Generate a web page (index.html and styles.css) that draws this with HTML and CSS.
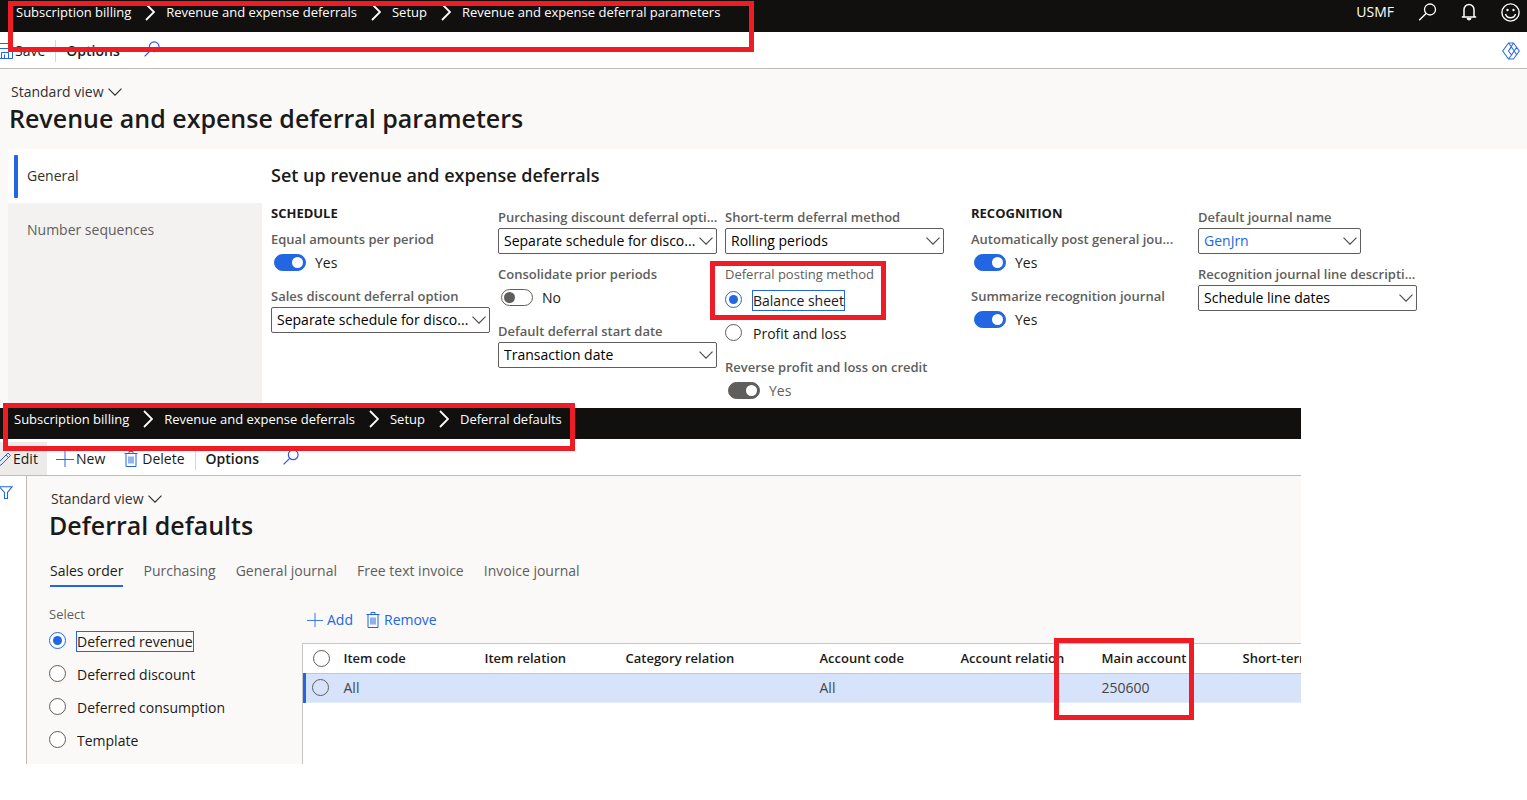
FILE: index.html
```html
<!DOCTYPE html>
<html lang="en">
<head>
<meta charset="utf-8">
<title>Revenue and expense deferral parameters</title>
<link rel="stylesheet" href="styles.css">
</head>
<body>
<svg class="defs" aria-hidden="true">
  <symbol id="crumb" viewBox="0 0 10 18"><path d="M1 1l8 8L1 17" fill="none" stroke="currentColor" stroke-width="1.800"/></symbol>
  <symbol id="down" viewBox="0 0 14 8"><path d="M.5.700L7 7.200 13.500.700" fill="none" stroke="currentColor" stroke-width="1.200"/></symbol>
  <symbol id="search" viewBox="0 0 18 18"><circle cx="11.500" cy="6.500" r="5.500" fill="none" stroke="currentColor" stroke-width="1.300"/><path d="M7.500 10.500L.7 17.300" stroke="currentColor" stroke-width="1.400"/></symbol>
  <symbol id="plus" viewBox="0 0 18 16"><path d="M9 0v16M0 8.500h18" stroke="currentColor" stroke-width="1" fill="none"/></symbol>
  <symbol id="trash" viewBox="0 0 14 16"><path d="M.5 2.500h13M5 2.500v-2h4v2M2 2.500v13h10v-13M5 5.500v7M7 5.500v7M9 5.500v7" fill="none" stroke="currentColor"/></symbol>
</svg>

<section class="screen first">
  <header class="topbar">
    <nav class="crumbs" aria-label="Breadcrumb">
      <a href="#">Subscription billing</a><svg><use href="#crumb"/></svg>
      <a href="#">Revenue and expense deferrals</a><svg><use href="#crumb"/></svg>
      <a href="#">Setup</a><svg><use href="#crumb"/></svg>
      <a href="#">Revenue and expense deferral parameters</a>
    </nav>
    <div class="tools">
      <span class="company">USMF</span>
      <button aria-label="Search"><svg width="19" height="18"><use href="#search"/></svg></button>
      <button aria-label="Notifications"><svg width="16" height="18" viewBox="0 0 16 18"><path d="M3 13.500V6.500a5 5 0 0 1 10 0v7M.8 14h14.400" fill="none" stroke="currentColor" stroke-width="1.500"/><path d="M6 15a2 2 0 0 0 4 0" fill="currentColor" stroke="currentColor"/></svg></button>
      <button aria-label="Feedback"><svg width="19" height="19" viewBox="0 0 19 19"><circle cx="9.500" cy="9.500" r="8.600" fill="none" stroke="currentColor" stroke-width="1.400"/><circle cx="6.500" cy="7" r="1.200" fill="currentColor"/><circle cx="12.500" cy="7" r="1.200" fill="currentColor"/><path d="M4.500 11a5.200 5.200 0 0 0 10 0" fill="none" stroke="currentColor" stroke-width="1.400"/></svg></button>
    </div>
  </header>
  <div class="actions">
    <button class="save"><svg width="13" height="16" viewBox="0 0 13 16"><path d="M0 .5h12.500v15H0M0 5.500h12.500M1.500 15V9.500h7V15M4.500 15v-3.500" fill="none" stroke="#2266e3"/></svg>Save</button>
    <span class="divider"></span>
    <button class="strong">Options</button>
    <button class="find" aria-label="Search actions"><svg width="16" height="16"><use href="#search"/></svg></button>
    <button class="apps" aria-label="Power Apps"><svg width="18" height="18" viewBox="0 0 18 18"><path d="M6.500 1h5L17.300 9l-5.800 8h-5L.7 9zM6.500 1l3 4-3 4 3 4-3 4M11.500 1l-5 8M9.500 5l5 7.500M9.500 13l5-7.500" fill="none" stroke="#2f6fe4" stroke-width="1.100"/></svg></button>
  </div>
  <div class="heading">
    <button class="view">Standard view <svg width="14" height="8"><use href="#down"/></svg></button>
    <h1>Revenue and expense deferral parameters</h1>
  </div>
  <div class="params">
    <nav class="side">
      <a class="current" href="#">General</a>
      <a href="#">Number sequences</a>
    </nav>
    <main class="form">
      <h2>Set up revenue and expense deferrals</h2>
      <div class="groups">
        <div class="column">
          <h3>SCHEDULE</h3>
          <div class="field"><label for="equal">Equal amounts per period</label><div class="switch"><input type="checkbox" id="equal" checked><span>Yes</span></div></div>
          <div class="field"><label for="sales">Sales discount deferral option</label><select id="sales"><option>Separate schedule for disco...</option></select></div>
        </div>
        <div class="column">
          <div class="field"><label for="purch">Purchasing discount deferral opti...</label><select id="purch"><option>Separate schedule for disco...</option></select></div>
          <div class="field"><label for="cons">Consolidate prior periods</label><div class="switch"><input type="checkbox" id="cons"><span>No</span></div></div>
          <div class="field"><label for="start">Default deferral start date</label><select id="start"><option>Transaction date</option></select></div>
        </div>
        <div class="column">
          <div class="field"><label for="short">Short-term deferral method</label><select id="short"><option>Rolling periods</option></select></div>
          <fieldset class="posting">
            <legend>Deferral posting method</legend>
            <label class="radio"><input type="radio" name="posting" checked><span>Balance sheet</span></label>
            <label class="radio"><input type="radio" name="posting"><span>Profit and loss</span></label>
            <div class="mark mark-posting"></div>
          </fieldset>
          <div class="field"><label for="reverse">Reverse profit and loss on credit</label><div class="switch muted"><input type="checkbox" id="reverse" checked disabled><span>Yes</span></div></div>
        </div>
        <div class="column apart">
          <h3>RECOGNITION</h3>
          <div class="field"><label for="auto">Automatically post general jou...</label><div class="switch"><input type="checkbox" id="auto" checked><span>Yes</span></div></div>
          <div class="field"><label for="summ">Summarize recognition journal</label><div class="switch"><input type="checkbox" id="summ" checked><span>Yes</span></div></div>
        </div>
        <div class="column">
          <div class="field"><label for="journal">Default journal name</label><select id="journal" class="narrow"><option>GenJrn</option></select></div>
          <div class="field"><label for="line">Recognition journal line descripti...</label><select id="line"><option>Schedule line dates</option></select></div>
        </div>
      </div>
    </main>
  </div>
  <div class="mark mark-path"></div>
</section>

<section class="screen second">
  <header class="topbar">
    <nav class="crumbs" aria-label="Breadcrumb">
      <a href="#">Subscription billing</a><svg><use href="#crumb"/></svg>
      <a href="#">Revenue and expense deferrals</a><svg><use href="#crumb"/></svg>
      <a href="#">Setup</a><svg><use href="#crumb"/></svg>
      <a href="#">Deferral defaults</a>
    </nav>
  </header>
  <div class="actions">
    <button class="edit"><svg width="11" height="16" viewBox="0 0 11 16"><path d="M0 10L8 2l2.500 2.500L1 14l-1 .3M6 4l2.500 2.500" fill="none" stroke="#2266e3"/></svg>Edit</button>
    <button class="new"><svg width="18" height="16"><use href="#plus"/></svg>New</button>
    <button class="delete"><svg width="14" height="16"><use href="#trash"/></svg>Delete</button>
    <span class="divider"></span>
    <button class="strong">Options</button>
    <button class="find" aria-label="Search actions"><svg width="16" height="16"><use href="#search"/></svg></button>
  </div>
  <div class="workspace">
    <aside class="rail"><button aria-label="Filter"><svg width="13" height="14" viewBox="0 0 13 14"><path d="M0 .8h12L7.500 6.500v6h-3v-6L0 1.500" fill="none" stroke="#2266e3" stroke-width="1.100"/></svg></button></aside>
    <main class="content">
      <button class="view">Standard view <svg width="14" height="8"><use href="#down"/></svg></button>
      <h1>Deferral defaults</h1>
      <nav class="tabs">
        <a class="current" href="#">Sales order</a>
        <a href="#">Purchasing</a>
        <a href="#">General journal</a>
        <a href="#">Free text invoice</a>
        <a href="#">Invoice journal</a>
      </nav>
      <div class="split">
        <fieldset class="kinds">
          <legend>Select</legend>
          <label class="radio"><input type="radio" name="kind" checked><span>Deferred revenue</span></label>
          <label class="radio"><input type="radio" name="kind"><span>Deferred discount</span></label>
          <label class="radio"><input type="radio" name="kind"><span>Deferred consumption</span></label>
          <label class="radio"><input type="radio" name="kind"><span>Template</span></label>
          <label class="radio"><input type="radio" name="kind" aria-label="More"></label>
        </fieldset>
        <div class="grid">
          <div class="grid-actions">
            <button><svg width="16" height="16"><use href="#plus"/></svg>Add</button>
            <button><svg width="14" height="16"><use href="#trash"/></svg>Remove</button>
          </div>
          <div class="table-box">
            <table>
              <colgroup><col class="c-pick"><col class="c-std"><col class="c-std"><col class="c-wide"><col class="c-std"><col class="c-std"><col class="c-std"><col></colgroup>
              <thead><tr><th><input type="radio" name="all" aria-label="Select all"></th><th>Item code</th><th>Item relation</th><th>Category relation</th><th>Account code</th><th>Account relation</th><th>Main account</th><th>Short-term</th></tr></thead>
              <tbody><tr><td><input type="radio" name="row" aria-label="Select row"></td><td>All</td><td></td><td></td><td>All</td><td></td><td>250600</td><td></td></tr></tbody>
            </table>
            <div class="mark mark-account"></div>
          </div>
        </div>
      </div>
    </main>
  </div>
  <div class="mark mark-path"></div>
</section>
</body>
</html>
```

FILE: styles.css
```css
* { box-sizing: border-box; }

body {
  margin: 0;
  overflow: hidden;
  background: #fff;
  color: #1b1a19;
  font: 14px/20px "Open Sans", "Noto Sans", sans-serif;
}

a { color: inherit; text-decoration: none; white-space: nowrap; }
h1, h2, h3 { margin: 0; white-space: nowrap; }
svg { flex: none; display: block; }
.defs { position: absolute; width: 0; height: 0; }

button {
  display: flex;
  align-items: center;
  padding: 0;
  border: 0;
  background: none;
  color: inherit;
  font: inherit;
  white-space: nowrap;
}

.screen { position: relative; }
.first { height: 408px; }
.first .params { height: 259px; }
.second { margin-right: 226px; }

/* Top bar */
.topbar {
  display: flex;
  justify-content: space-between;
  height: 32px;
  padding: 0 7px 8px 16px;
  background: #11100f;
  color: #fff;
}
.second .topbar { height: 31px; padding-left: 14px; padding-bottom: 9px; }
.crumbs { display: flex; align-items: center; font-size: 13px; }
.crumbs svg { width: 10px; height: 18px; margin: 0 11px 0 14px; }
.tools { display: flex; align-items: center; }
.tools button { margin-left: 24px; }
.company { font-size: 14px; }

/* Action bar */
.actions {
  display: flex;
  align-items: center;
  height: 37px;
  padding-top: 2px;
  border-bottom: 1px solid #bebbb8;
}
.second .actions { padding-top: 3px; }
.strong { font-weight: 600; }
.divider { width: 1px; height: 22px; margin: 0 10px; background: #d8d6d4; }
.find { margin: 0 0 4px 24px; color: #2f55dd; }
.apps { margin-left: auto; margin-right: 7px; }
.save { gap: 2px; }
.edit { gap: 2px; width: 47px; height: 33px; background: #edebe9; }
.new { gap: 2px; margin-left: 9px; }
.delete { gap: 4px; margin-left: 19px; }
.new svg, .delete svg { color: #2266e3; }

/* Page headings */
.heading { height: 80px; padding: 13px 9px 0; background: #faf9f8; }
.view { gap: 4px; margin-left: 2px; color: #323130; }
h1 { font-size: 25px; line-height: 32px; font-weight: 600; }

/* Parameters form */
.params { display: flex; padding-left: 8px; background: linear-gradient(to right, #faf9f8 8px, #fff 8px); }
.side { flex: 0 0 254px; background: #f3f2f1; }
.side a {
  display: flex;
  align-items: center;
  height: 54px;
  padding-left: 9px;
  color: #605e5c;
}
.side a::before { content: ""; width: 4px; height: 43px; margin: 0 9px 0 -3px; border-radius: 1px; }
.side .current { background: #fff; color: #323130; }
.side .current::before { background: #2266e3; }
.form { flex: 1; min-width: 0; padding: 14px 9px 0; }
h2 { font-size: 18px; line-height: 24px; font-weight: 600; margin-bottom: 20px; }
h3 { font-size: 13px; line-height: 12px; font-weight: 700; }
.groups { display: flex; gap: 9px; }
.column { display: flex; flex-direction: column; gap: 10px; flex: 0 0 218px; min-width: 0; }
.apart { margin-left: 19px; }
.field { display: flex; flex-direction: column; gap: 1px; }
.field > label { color: #605e5c; font-size: 13px; font-weight: 600; white-space: nowrap; }

select {
  appearance: none;
  width: 219px;
  height: 26px;
  padding: 0 20px 0 5px;
  border: 1px solid #605e5c;
  border-radius: 2px;
  background: #fff url("data:image/svg+xml,%3Csvg xmlns='http://www.w3.org/2000/svg' width='14' height='8'%3E%3Cpath d='M.5.7L7 7.200 13.500.7' fill='none' stroke='%23504e4c' stroke-width='1.200'/%3E%3C/svg%3E") no-repeat right 3px center;
  color: #000;
  font: inherit;
}
.narrow { width: 163px; color: #2266e3; }

.switch { display: flex; align-items: center; gap: 9px; height: 26px; padding-left: 3px; }
.switch input {
  appearance: none;
  display: flex;
  align-items: center;
  width: 32px;
  height: 17px;
  margin: 0 0 2px;
  padding: 0 2px;
  border: 1px solid #605e5c;
  border-radius: 9px;
}
.switch input::before { content: ""; width: 11px; height: 11px; border-radius: 50%; background: #605e5c; }
.switch input:checked { justify-content: flex-end; border-color: #2266e3; background: #2266e3; }
.switch input:checked::before { background: #fff; }
.muted { color: #605e5c; }
.muted input:checked { border-color: #605e5c; background: #605e5c; }

/* Radio lists */
fieldset { position: relative; min-width: 0; margin: 0; padding: 0; border: 0; }
legend { padding: 0; color: #605e5c; font-size: 13px; margin-bottom: 4px; }
.radio { display: flex; align-items: center; gap: 10px; height: 26px; margin-bottom: 7px; white-space: nowrap; }
.posting legend { margin-bottom: 3px; }
.posting .radio:nth-of-type(2) { margin-bottom: 1px; }
.radio span { border: 1px solid transparent; line-height: 19px; }
.radio input:checked + span { border-color: #2266e3; }
input[type="radio"] {
  appearance: none;
  display: grid;
  place-items: center;
  flex: none;
  width: 17px;
  height: 17px;
  margin: 0;
  border: 1px solid #605e5c;
  border-radius: 50%;
  background: #fff;
}
.radio input[type="radio"] { margin-bottom: 2px; }
input[type="radio"]:checked { border-color: #2266e3; }
input[type="radio"]:checked::before { content: ""; width: 9px; height: 9px; border-radius: 50%; background: #2266e3; }

/* Deferral defaults */
.workspace { display: flex; height: 288px; overflow: hidden; }
.rail { flex: 0 0 27px; padding-top: 10px; border-right: 1px solid #bebbb8; }
.content { flex: 1; min-width: 0; padding: 13px 0 0 22px; background: #faf9f8; }
.tabs { display: flex; gap: 20px; margin: 20px 0 17px 1px; color: #605e5c; }
.tabs a { padding-bottom: 4px; border-bottom: 2px solid transparent; }
.tabs .current { border-color: #2266e3; color: #1b1a19; }
.split { display: flex; }
.kinds { flex: 0 0 254px; }
.grid { flex: 1; min-width: 0; padding-top: 6px; }
.grid-actions { display: flex; gap: 13px; padding-left: 4px; margin-bottom: 13px; color: #2266e3; }
.grid-actions button { gap: 4px; }
.table-box { position: relative; height: 160px; margin-left: -1px; border: 1px solid #c8c6c4; border-width: 1px 0 0 1px; background: #fff; }
table { width: 100%; table-layout: fixed; border-collapse: collapse; }
th, td { height: 29px; padding: 0 0 0 8px; overflow: hidden; text-align: left; white-space: nowrap; }
th { border-bottom: 1px solid #c8c6c4; font-size: 13px; font-weight: 600; }
td { border-bottom: 1px solid #e4ecfc; background: #d7e3fb; color: #484644; }
td:first-child { border-left: 3px solid #2266e3; padding-left: 6px; }
td input[type="radio"] { background: transparent; }
.c-pick { width: 31px; }
.c-std { width: 141px; }
.c-wide { width: 194px; }

/* Highlight frames drawn over the content */
.mark { position: absolute; border: 5px solid #ee1c24; pointer-events: none; }
.first > .mark-path { left: 8px; top: 1px; width: 746px; height: 51px; }
.second > .mark-path { left: 3px; top: -5px; width: 572px; height: 48px; }
.mark-posting { left: -15px; top: -26px; width: 176px; height: 59px; }
.mark-account { left: 751px; top: -6px; width: 140px; height: 82px; }
```
